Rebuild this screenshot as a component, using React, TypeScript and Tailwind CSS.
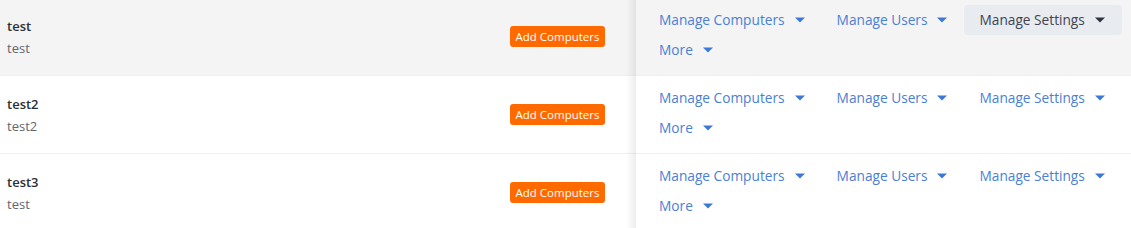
import React from "react";

const Caret = () => (
  <svg width="10" height="6" viewBox="0 0 10 6" className="ml-[10px] shrink-0" fill="currentColor">
    <path d="M0 0.5 L10 0.5 L5 5.5 Z" />
  </svg>
);

const NavBtn = ({ label, active }: { label: string; active?: boolean }) => (
  <div
    className={
      "flex h-[30px] items-center rounded-[4px] pl-[15px] pr-[17px] text-[13.7px] " +
      (active ? "bg-[#e8ebf0] text-[#3f4450]" : "text-[#4a80d4]")
    }
  >
    <span>{label}</span>
    <span className={active ? "text-[#2f3440]" : "text-[#3b78d8]"}>
      <Caret />
    </span>
  </div>
);

const rows = [
  { title: "test", sub: "test", hover: true },
  { title: "test2", sub: "test2" },
  { title: "test3", sub: "test" },
];

export default function App() {
  return (
    <div className="w-[1131px] h-[228px] overflow-hidden bg-white" style={{ fontFamily: '"Open Sans", "Noto Sans", sans-serif' }}>
      <div className="-mt-[2px]">
        {rows.map((r, i) => (
          <div
            key={i}
            className={
              "flex h-[78px] border-b border-[#f0f0f0] " + (r.hover ? "bg-[#f4f4f4]" : "bg-white")
            }
          >
            <div className="flex flex-1 items-center justify-between pl-[7px] pr-[31px]">
              <div className="flex flex-col">
                <span className="text-[13px] font-semibold leading-[22px] text-[#2b2f36]">{r.title}</span>
                <span className="text-[13px] leading-[22px] text-[#5f6670]">{r.sub}</span>
              </div>
              <button className="h-[21px] w-[95px] whitespace-nowrap rounded-[3px] bg-[#ff6a00] text-[11.5px] leading-[21px] text-white">
                Add Computers
              </button>
            </div>
            <div className="relative w-[495px] shrink-0 pl-[8px] pt-[7px]">
              <div className="pointer-events-none absolute left-[-10px] top-0 bottom-[-1px] w-[10px] bg-gradient-to-r from-transparent to-[rgba(0,0,0,0.07)]" />
              <div className="flex flex-wrap">
                <NavBtn label="Manage Computers" />
                <NavBtn label="Manage Users" />
                <NavBtn label="Manage Settings" active={r.hover} />
                <NavBtn label="More" />
              </div>
            </div>
          </div>
        ))}
      </div>
    </div>
  );
}
